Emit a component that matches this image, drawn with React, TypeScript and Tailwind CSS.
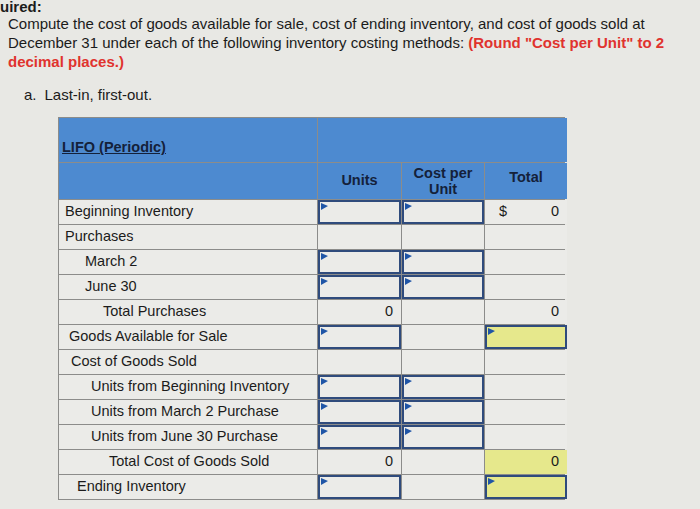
type Row = {
  label: string;
  indent: number;
  units: "input" | "plain" | "zero";
  cost: "input" | "plain";
  total: "plain" | "dollar" | "zero" | "yellow" | "yellowInput";
};

const rows: Row[] = [
  { label: "Beginning Inventory", indent: 6, units: "input", cost: "input", total: "dollar" },
  { label: "Purchases", indent: 6, units: "plain", cost: "plain", total: "plain" },
  { label: "March 2", indent: 26, units: "input", cost: "input", total: "plain" },
  { label: "June 30", indent: 26, units: "input", cost: "input", total: "plain" },
  { label: "Total Purchases", indent: 44, units: "zero", cost: "plain", total: "zero" },
  { label: "Goods Available for Sale", indent: 10, units: "input", cost: "plain", total: "yellowInput" },
  { label: "Cost of Goods Sold", indent: 12, units: "plain", cost: "plain", total: "plain" },
  { label: "Units from Beginning Inventory", indent: 32, units: "input", cost: "input", total: "plain" },
  { label: "Units from March 2 Purchase", indent: 32, units: "input", cost: "input", total: "plain" },
  { label: "Units from June 30 Purchase", indent: 32, units: "input", cost: "input", total: "plain" },
  { label: "Total Cost of Goods Sold", indent: 50, units: "zero", cost: "plain", total: "yellow" },
  { label: "Ending Inventory", indent: 18, units: "input", cost: "plain", total: "yellowInput" },
];

const Flag = () => (
  <svg className="absolute left-[1px] top-[1px]" width="7" height="8" viewBox="0 0 7 8">
    <polygon points="0,0 7,3 0,7" fill="#1f55a6" />
  </svg>
);

const InputBox = ({ yellow }: { yellow?: boolean }) => (
  <div
    className={`relative h-full w-full border-2 border-[#2f4b7c] ${
      yellow ? "bg-[#e6e88c]" : "bg-[#ebebe8]"
    }`}
  >
    <Flag />
  </div>
);

const Plain = ({ children, yellow }: { children?: React.ReactNode; yellow?: boolean }) => (
  <div
    className={`flex h-full w-full items-center justify-end pr-[8px] ${
      yellow ? "bg-[#e6e88c]" : "bg-[#ebebe8]"
    }`}
  >
    {children}
  </div>
);

const App = () => {
  return (
    <div
      className="h-[509px] w-[700px] overflow-hidden bg-[#e8e8e4] text-[#1b1b1b]"
      style={{ fontFamily: '"Liberation Sans", Arial, sans-serif' }}
    >
      <div className="text-[15px] font-bold leading-[14px]">uired:</div>
      <p className="whitespace-nowrap pl-[8px] text-[15px] leading-[19px]">
        Compute the cost of goods available for sale, cost of ending inventory, and cost of goods sold at
        <br />
        December 31 under each of the following inventory costing methods:{" "}
        <span className="font-bold text-[#e0332e]">(Round "Cost per Unit" to 2</span>
        <br />
        <span className="font-bold text-[#e0332e]">decimal places.)</span>
      </p>
      <div className="mt-[14px] pl-[24px] text-[15px] leading-[20px]">
        a.<span className="ml-[8px]">Last-in, first-out.</span>
      </div>

      <div className="ml-[58px] mt-[12px] grid w-[507px] grid-cols-[258px_83px_82px_82px] gap-px bg-[#8c8c8a] p-px text-[14.5px]">
        <div className="flex h-[44px] items-end bg-[#4d8ad0] pb-[3px] pl-[3px] font-bold text-[#14213a] underline">
          LIFO (Periodic)
        </div>
        <div className="col-span-3 bg-[#4d8ad0]" />

        <div className="h-[36px] bg-[#4d8ad0]" />
        <div className="flex items-center justify-center bg-[#4d8ad0] font-bold text-[#14213a]">Units</div>
        <div className="flex flex-col items-center justify-center bg-[#4d8ad0] font-bold leading-[16px] text-[#14213a]">
          <span>Cost per</span>
          <span>Unit</span>
        </div>
        <div className="flex items-center justify-center bg-[#4d8ad0] pb-[6px] font-bold text-[#14213a]">Total</div>

        {rows.map((r) => (
          <div key={r.label} className="contents">
            <div
              className="flex h-[24px] items-center bg-[#ebebe8]"
              style={{ paddingLeft: r.indent }}
            >
              {r.label}
            </div>
            <div>
              {r.units === "input" ? <InputBox /> : <Plain>{r.units === "zero" ? "0" : null}</Plain>}
            </div>
            <div>{r.cost === "input" ? <InputBox /> : <Plain />}</div>
            <div>
              {r.total === "dollar" ? (
                <div className="flex h-full items-center justify-between bg-[#ebebe8] pl-[14px] pr-[8px]">
                  <span>$</span>
                  <span>0</span>
                </div>
              ) : r.total === "zero" ? (
                <Plain>0</Plain>
              ) : r.total === "yellow" ? (
                <Plain yellow>0</Plain>
              ) : r.total === "yellowInput" ? (
                <InputBox yellow />
              ) : (
                <Plain />
              )}
            </div>
          </div>
        ))}
      </div>
    </div>
  );
};

export default App;
